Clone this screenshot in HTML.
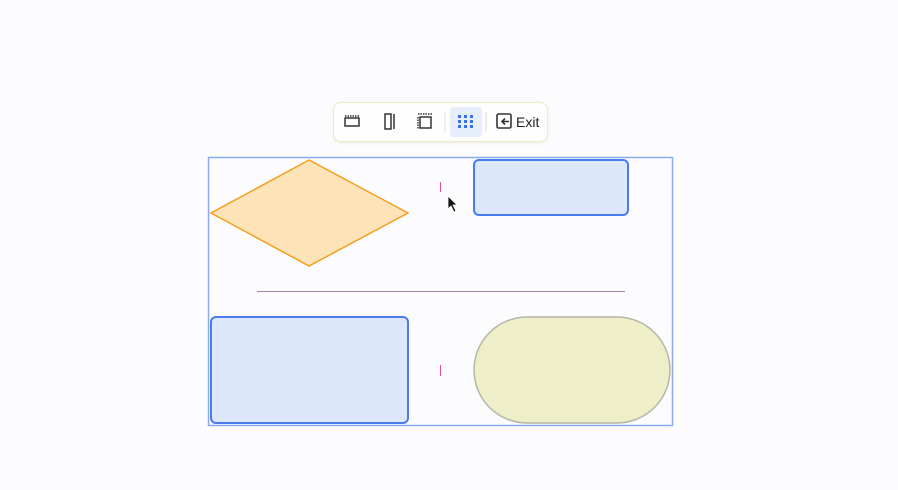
<!DOCTYPE html><html><head><style>
body{margin:0;width:898px;height:490px;background:#fcfcfe;font-family:"Liberation Sans",sans-serif;position:relative;overflow:hidden}
.tb{position:absolute;left:333px;top:102px;width:213px;height:38px;border:1px solid #ecebc8;border-radius:8px;background:#fefefe;box-shadow:0 1px 3px rgba(200,200,150,.3)}
</style></head><body>
<div class="tb"></div>
<svg width="898" height="490" style="position:absolute;left:0;top:0">
<g stroke="#333" stroke-width="1.5" fill="none">
<rect x="345" y="118" width="14" height="8"/><line x1="345" y1="116" x2="359" y2="116" stroke-dasharray="1.5 1"/>
<rect x="385" y="114" width="6" height="15"/><line x1="394" y1="114" x2="394" y2="129"/>
<rect x="420" y="117" width="11" height="11"/><line x1="418" y1="114" x2="433" y2="114" stroke-dasharray="1.5 1"/><line x1="418" y1="117" x2="418" y2="129" stroke-dasharray="1.5 1"/>
</g>
<line x1="445" y1="112" x2="445" y2="132" stroke="#ddd"/>
<rect x="450" y="107" width="32" height="30" rx="4" fill="#e6edfb"/>
<g fill="#3b6fe8">
<rect x="458" y="115" width="3" height="3"/><rect x="464" y="115" width="3" height="3"/><rect x="470" y="115" width="3" height="3"/>
<rect x="458" y="120" width="3" height="3"/><rect x="464" y="120" width="3" height="3"/><rect x="470" y="120" width="3" height="3"/>
<rect x="458" y="125" width="3" height="3"/><rect x="464" y="125" width="3" height="3"/><rect x="470" y="125" width="3" height="3"/>
</g>
<line x1="486" y1="112" x2="486" y2="132" stroke="#ddd"/>
<g stroke="#333" stroke-width="1.6" fill="none"><rect x="497" y="114" width="14" height="14" rx="1.5"/><path d="M509 121.5H502M505 118.5L502 121.5L505 124.5"/></g>
<text x="516" y="127" font-size="14" fill="#222">Exit</text>
<rect x="208.5" y="157.5" width="464" height="268" fill="none" stroke="#8aa9f3" stroke-width="1.5"/>
<polygon points="309,160 211,213 309,266 408,213" fill="#fde4b8" stroke="#f59e1c" stroke-width="1.5"/>
<rect x="474" y="160" width="154" height="55" rx="5" fill="#dde7fb" stroke="#4a7bef" stroke-width="2"/>
<line x1="257" y1="291.5" x2="625" y2="291.5" stroke="#b07cab" stroke-width="1"/>
<rect x="211" y="317" width="197" height="106" rx="5" fill="#dde7fb" stroke="#4a7bef" stroke-width="2"/>
<rect x="474" y="317" width="196" height="106" rx="53" fill="#eeeec8" stroke="#b5b5a8" stroke-width="1.5"/>
<line x1="440.5" y1="182" x2="440.5" y2="192" stroke="#ee4aa0" stroke-width="1"/>
<line x1="440.5" y1="365" x2="440.5" y2="376" stroke="#ee4aa0" stroke-width="1"/>
<path d="M448 196L448 209L451 206L454 212L456 211L453 205L457 205Z" fill="#111" stroke="#fff" stroke-width="0.8"/>
</svg>
</body></html>
